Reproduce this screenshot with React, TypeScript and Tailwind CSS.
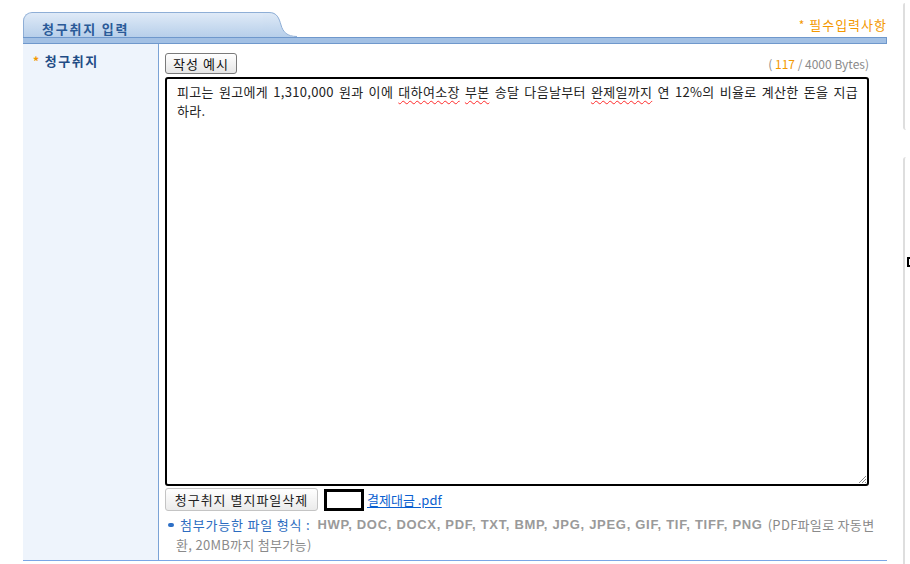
import React from 'react';

const KR = "'Noto Sans CJK KR', 'Noto Sans', sans-serif";

function HeaderTab() {
  return (
    <div className="flex flex-col">
      <div className="flex h-[25px]">
        <div className="w-[240px] rounded-tl-[9px] border-l border-t border-[#8eaed6] bg-gradient-to-b from-[#dfeaf7] to-[#b7cfea] pl-[18px] pt-[6px] text-[13px] font-bold tracking-[1.8px] text-[#2a5a98]">
          청구취지 입력
        </div>
        {/* curved tab edge */}
        <svg width="34" height="25" viewBox="0 0 34 25" className="block">
          <defs>
            <linearGradient id="tabg" x1="0" y1="0" x2="0" y2="1">
              <stop offset="0" stopColor="#dfeaf7" />
              <stop offset="1" stopColor="#b7cfea" />
            </linearGradient>
          </defs>
          <path d="M0 0 H6 C14 0 16 6 18 13 C20 20 24 25 34 25 H0 Z" fill="url(#tabg)" />
          <path d="M0 0.5 H6 C14 0.5 16 6 18 13 C20 20 24 24.5 34 24.5" fill="none" stroke="#8eaed6" strokeWidth="1" />
        </svg>
        <div className="flex flex-1 items-end justify-end pb-[3px] text-[13px] tracking-[1px] text-[#f39800]">
          <span className="mr-[4px] text-[12px]">*</span>필수입력사항
        </div>
      </div>
      <div className="h-[7px] border-y border-r border-[#6f98cc] bg-[#a2c0e4]" />
    </div>
  );
}

function Wavy({ children }: { children: React.ReactNode }) {
  return (
    <span className="underline decoration-[#ff2a2a] decoration-wavy decoration-1 underline-offset-[3px]">{children}</span>
  );
}

export default function App() {
  return (
    <div className="flex h-[564px] w-[910px] bg-white" style={{ fontFamily: KR }}>
      <div className="w-[903px] pl-[23px] pr-[16px] pt-[12px]">
        <HeaderTab />
        <div className="flex border-b border-[#7aa6e6]">
          {/* label column */}
          <div className="w-[136px] shrink-0 border-r border-[#7ba3d6] bg-[#eef4fc] pl-[10px] pt-[7px]">
            <div className="flex items-center text-[13px] font-bold tracking-[1.6px] text-[#1f4c86]">
              <span className="mr-[4px] text-[12px] text-[#f39800]">*</span>청구취지
            </div>
          </div>

          {/* input column */}
          <div className="min-w-0 flex-1 pl-[6px] pr-[18px] pt-[9px] pb-[5px]">
            <div className="flex h-[21px] items-center justify-between">
              <button className="h-[21px] w-[72px] rounded-[3px] border border-[#7a7a7a] bg-gradient-to-b from-white to-[#e6e6e6] text-[13px] tracking-[1px] text-[#111]">
                작성 예시
              </button>
              <div className="text-[12px] text-[#8a8a8a]">
                ( <span className="text-[#f39800]">117</span> / 4000 Bytes)
              </div>
            </div>

            <div className="relative mt-[3px] h-[409px] rounded-[3px] border-2 border-black pl-[10px] pt-[3px] text-[13px] leading-[19px] tracking-[0.3px] text-[#222] [word-spacing:2px]">
              <div className="whitespace-nowrap">
                피고는 원고에게 1,310,000 원과 이에 <Wavy>대하여소장</Wavy> <Wavy>부본</Wavy> 송달 다음날부터 <Wavy>완제일까지</Wavy> 연 12%의 비율로 계산한 돈을 지급
              </div>
              <div>하라.</div>
              {/* resize grip */}
              <svg width="10" height="10" viewBox="0 0 10 10" className="absolute bottom-0 right-0">
                <path d="M9 2 L2 9 M9 5 L5 9 M9 8 L8 9" stroke="#8a8a8a" strokeWidth="1" />
              </svg>
            </div>

            <div className="mt-[2px] flex h-[23px] items-center">
              <button className="h-[23px] w-[153px] rounded-[3px] border border-[#c4c4c4] bg-gradient-to-b from-white to-[#ebebeb] text-[13px] tracking-[1px] text-[#222]">
                청구취지 별지파일삭제
              </button>
              <div className="ml-[6px] h-[22px] w-[40px] border-[3px] border-black bg-white" />
              <a href="#" className="ml-[3px] text-[13px] text-[#0a5fd0] underline underline-offset-2">
                결제대금 .pdf
              </a>
            </div>

            <div className="mt-[4px] text-[13px] leading-[20px]">
              <div className="flex items-center whitespace-nowrap pl-[3px]">
                <span className="mr-[6px] h-[4px] w-[6px] shrink-0 rounded-full bg-[#2d6fc6]" />
                <span className="tracking-[0.8px] text-[#2c6cc0]">첨부가능한 파일 형식 :</span>
                <span className="ml-[7px] font-bold tracking-[0.7px] text-[#9a9a9a]" style={{ fontFamily: "'Liberation Sans', Arial, sans-serif" }}>
                  HWP, DOC, DOCX, PDF, TXT, BMP, JPG, JPEG, GIF, TIF, TIFF, PNG
                </span>
                <span className="ml-[5px] tracking-[0.3px] text-[#8a8a8a]">(PDF파일로 자동변</span>
              </div>
              <div className="flex whitespace-nowrap tracking-[0.3px] text-[#8a8a8a]">
                <span className="w-[11px] shrink-0" />
                환, 20MB까지 첨부가능)
              </div>
            </div>
          </div>
        </div>
      </div>

      {/* window edge */}
      <div className="flex w-[7px] flex-col pt-[3px]">
        <div className="h-[127px] rounded-t-[2px] rounded-b-[3px] border-l-2 border-[#dedede]" />
        <div className="relative mt-[27px] flex-1 rounded-t-[3px] border-l-2 border-[#dedede]">
          <div className="absolute left-[2px] top-[100px] h-[10px] w-[5px] border-y-2 border-l-2 border-black" />
        </div>
      </div>
    </div>
  );
}
